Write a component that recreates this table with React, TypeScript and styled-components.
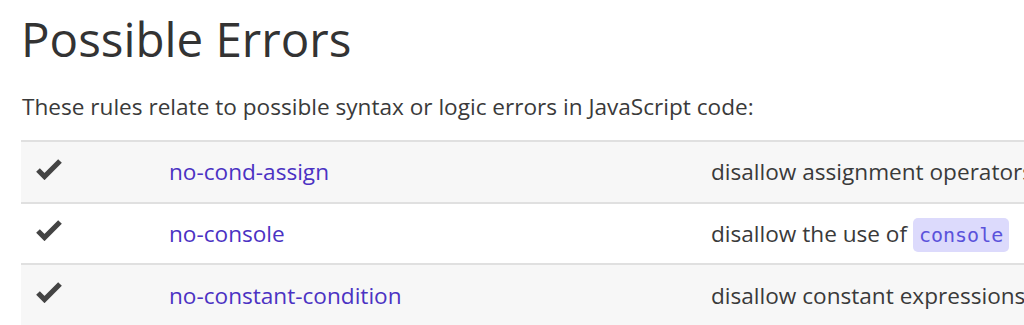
import React from "react";
import styled, { createGlobalStyle } from "styled-components";

const GlobalStyle = createGlobalStyle`
  html, body {
    margin: 0;
    padding: 0;
    background: #fff;
    overflow: hidden;
  }
  body {
    font-family: "Open Sans", "Noto Sans", sans-serif;
    color: #3a3a3a;
  }
`;

interface Rule {
  name: string;
  description: React.ReactNode;
}

const rules: Rule[] = [
  { name: "no-cond-assign", description: "disallow assignment operators in conditional expressions" },
  {
    name: "no-console",
    description: (
      <>
        disallow the use of <code>console</code>
      </>
    ),
  },
  { name: "no-constant-condition", description: "disallow constant expressions in conditions" },
];

const CheckIcon = () => (
  <svg width="26" height="22" viewBox="0 0 26 22" aria-hidden="true">
    <path d="M2 12 L8.5 18.5 L24 3" fill="none" stroke="#444" strokeWidth="5.2" strokeLinejoin="miter" />
  </svg>
);

const Page: React.FC<{ className?: string }> = ({ className }) => (
  <div className={className}>
    <GlobalStyle />
    <h1>Possible Errors</h1>
    <p>These rules relate to possible syntax or logic errors in JavaScript code:</p>
    <table>
      <tbody>
        {rules.map((rule, i) => (
          <tr key={rule.name} className={i % 2 === 0 ? "rule rule--odd" : "rule"}>
            <td className="rule__check">
              <CheckIcon />
            </td>
            <td className="rule__name">
              <a href={`#${rule.name}`}>{rule.name}</a>
            </td>
            <td className="rule__desc">{rule.description}</td>
          </tr>
        ))}
      </tbody>
    </table>
  </div>
);

const StyledPage = styled(Page)`
  padding-left: 21px;
  width: 1500px;

  h1 {
    margin: 0;
    padding-top: 11px;
    font-size: 47.5px;
    font-weight: 400;
    line-height: 56px;
    color: #333;
  }

  p {
    margin: 26px 0 0 1px;
    font-size: 22.6px;
    line-height: 28px;
  }

  table {
    margin-top: 19px;
    border-collapse: collapse;
    width: 1400px;
    font-size: 22.6px;
  }

  .rule {
    height: 61.5px;
    border-top: 2px solid #e0e0e0;

    &--odd {
      background: #f7f7f7;
    }

    td {
      padding: 0;
      vertical-align: middle;
    }
  }

  .rule__check {
    width: 133px;
    padding-left: 15px !important;

    svg {
      display: block;
      margin-top: -6px;
    }
  }

  .rule__name {
    width: 542px;

    a {
      color: #4b32c3;
      text-decoration: none;
    }
  }

  .rule__desc {
    code {
      font-family: "DejaVu Sans Mono", "Liberation Mono", monospace;
      font-size: 20px;
      color: #5a52db;
      background: #dcdafc;
      border-radius: 5px;
      padding: 5px 6px;
    }
  }
`;

export default function App() {
  return <StyledPage />;
}
